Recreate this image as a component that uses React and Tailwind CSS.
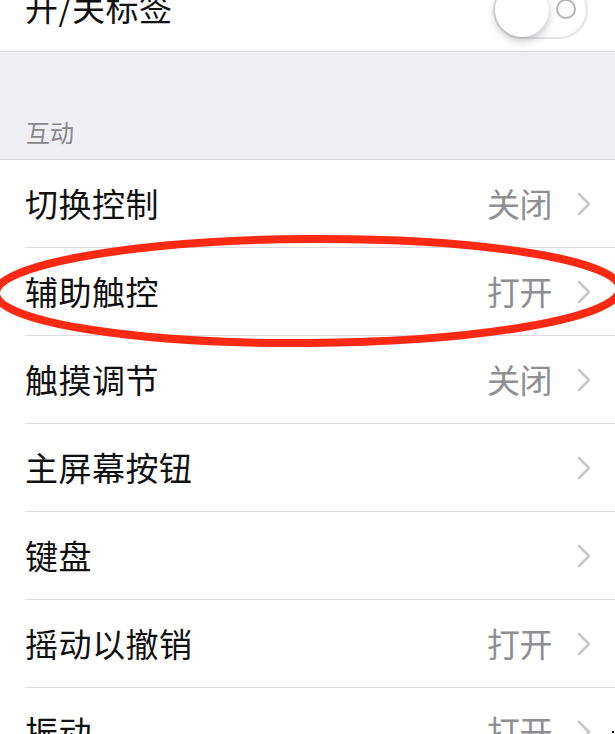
import React from "react";

const FONT = { fontFamily: '"Noto Sans CJK SC", "Noto Sans", sans-serif' };

function Chevron() {
  return (
    <svg width="14" height="24" viewBox="0 0 14 24" className="shrink-0">
      <path d="M2 2 L12 12 L2 22" fill="none" stroke="#c7c7cc" strokeWidth="2.6" strokeLinecap="round" strokeLinejoin="round" />
    </svg>
  );
}

function Row({ label, value }) {
  return (
    <div className="bg-white pl-[25px]">
      <div className="h-[88px] border-b border-[#dcdce0] flex items-center pr-[24px]">
        <span className="text-[33px] leading-none text-[#111] tracking-[0.5px]">{label}</span>
        <div className="ml-auto flex items-center gap-[25px]">
          {value && <span className="text-[33px] leading-none text-[#8e8e93] tracking-[-0.5px]">{value}</span>}
          <Chevron />
        </div>
      </div>
    </div>
  );
}

export default function App() {
  const rows = [
    ["切换控制", "关闭"],
    ["辅助触控", "打开"],
    ["触摸调节", "关闭"],
    ["主屏幕按钮", ""],
    ["键盘", ""],
    ["摇动以撤销", "打开"],
    ["振动", "打开"],
  ];
  return (
    <div className="relative w-[615px] h-[734px] overflow-hidden bg-[#efeff4]" style={FONT}>
      {/* toggle row */}
      <div className="bg-white mt-[-37px] h-[89px] border-b border-[#dcdce0] flex items-center pl-[25px] pr-[27px]">
        <span className="text-[33px] leading-none text-[#111] tracking-[0.5px]">开/关标签</span>
        <div className="ml-auto relative w-[95px] h-[58px] rounded-full border-2 border-[#e3e3e8] bg-white mt-[6px]">
          <div className="absolute left-[0px] top-[0px] w-[54px] h-[54px] rounded-full bg-white shadow-[0_4px_8px_rgba(0,0,0,0.22),0_0_1px_rgba(0,0,0,0.15)]" />
          <div className="absolute right-[10px] top-[16px] w-[20px] h-[20px] rounded-full border-2 border-[#b5b5ba]" />
        </div>
      </div>
      {/* section header */}
      <div className="h-[108px] flex items-end pl-[26px] pb-[15px] border-b border-[#dcdce0]">
        <span className="text-[24px] leading-none text-[#86868b]">互动</span>
      </div>
      {rows.map(([l, v]) => (
        <Row key={l} label={l} value={v} />
      ))}
      {/* red annotation ellipse */}
      <svg className="absolute left-0 top-0 pointer-events-none" width="615" height="734" viewBox="0 0 615 734">
        <ellipse cx="308" cy="291" rx="312" ry="52" fill="none" stroke="#fc2a12" strokeWidth="8" transform="rotate(-0.4 308 291)" />
      </svg>
      <span className="absolute left-[612px] top-[731px] w-[2px] h-[2px] bg-black" />
    </div>
  );
}
